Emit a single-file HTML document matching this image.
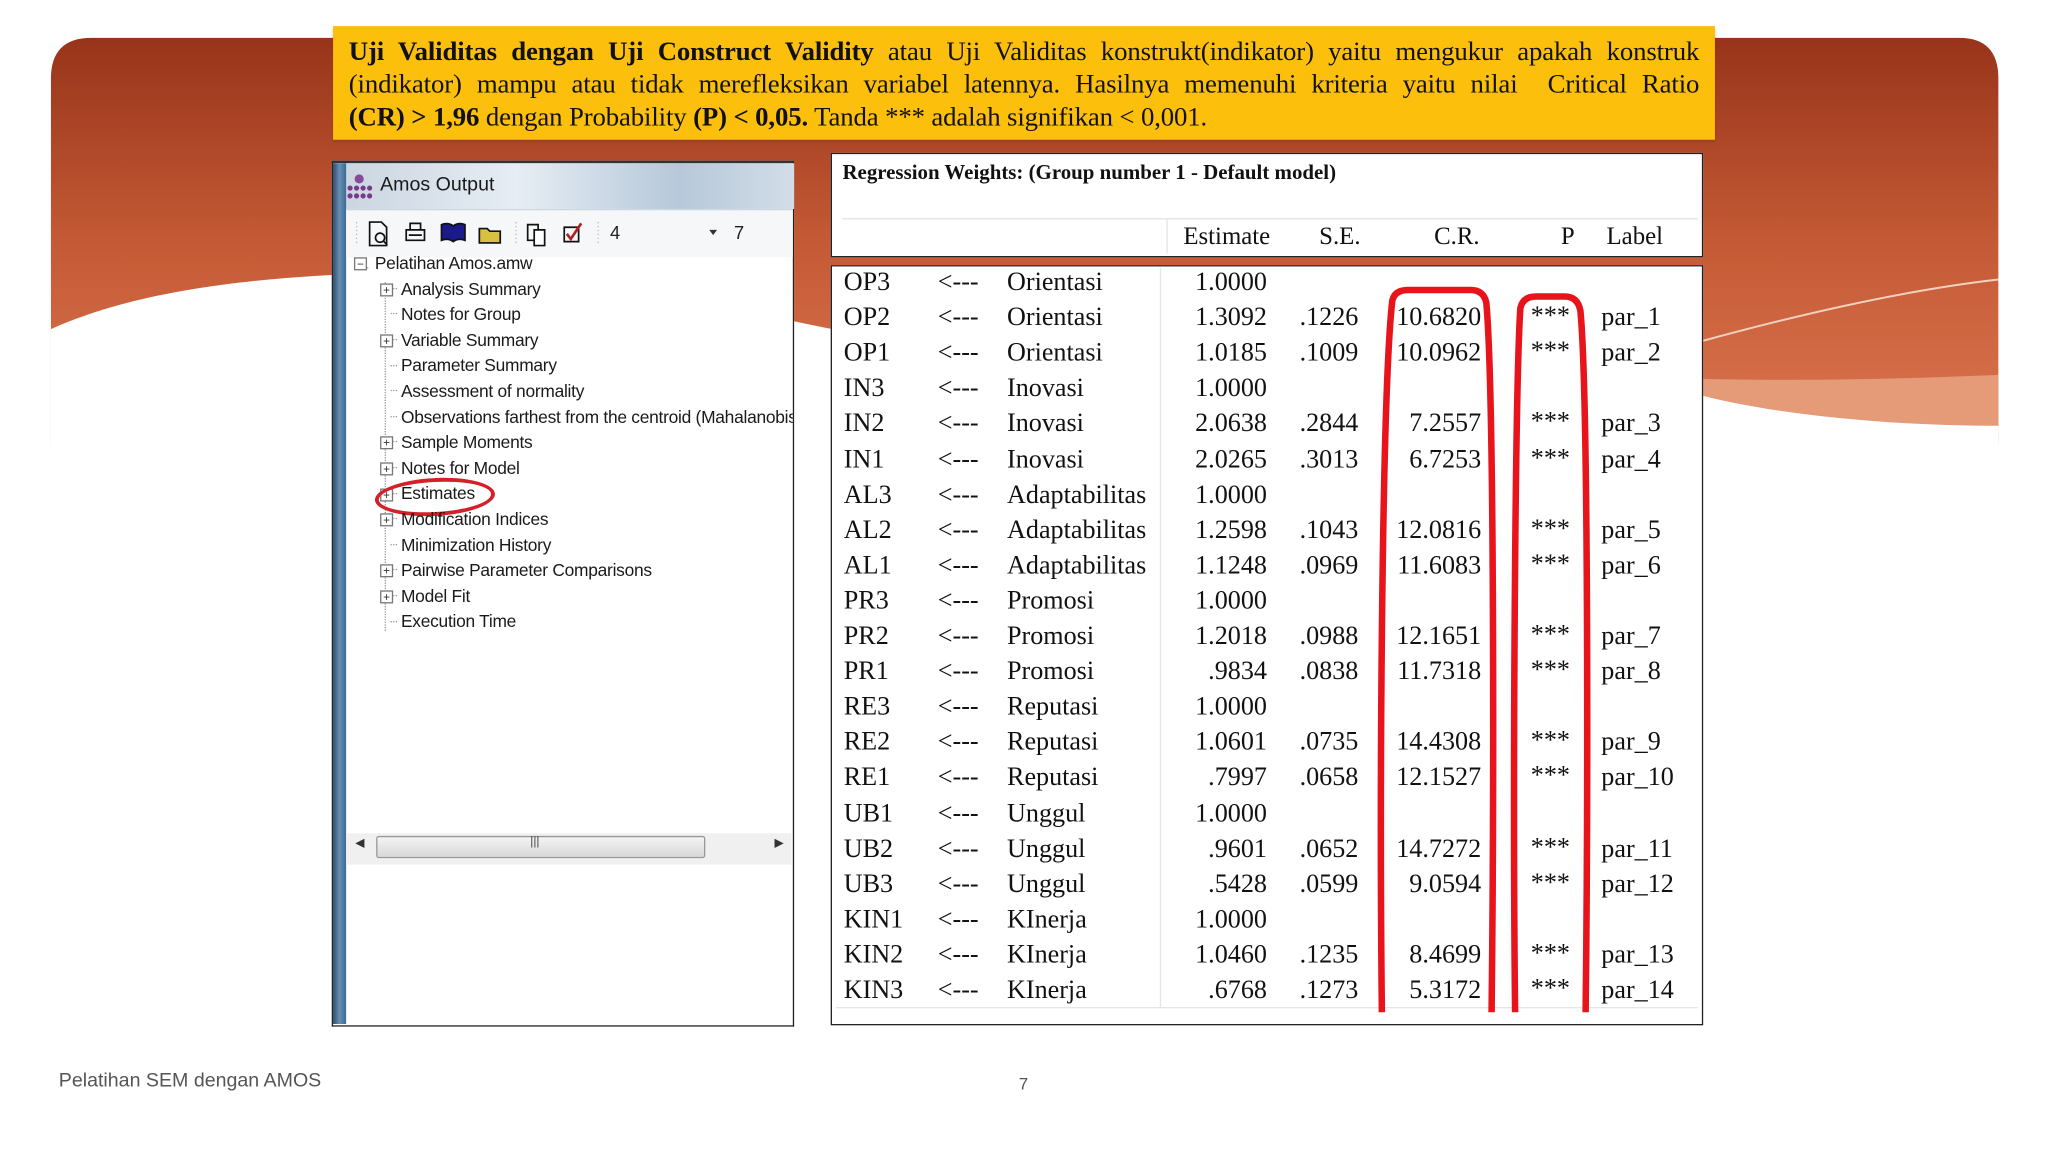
<!DOCTYPE html>
<html><head><meta charset="utf-8"><style>
html,body{margin:0;padding:0;background:#fff;overflow:hidden}
#w{width:2048px;height:1152px;position:relative;overflow:hidden}
#s{position:absolute;left:0;top:0;width:1568px;height:882px;transform:scale(1.30612);transform-origin:0 0}
.a{position:absolute;white-space:nowrap}
.ser{font-family:"Liberation Serif",serif}
.y{position:absolute;left:255px;top:20px;width:1058px;height:87px;background:#fcbf0c;box-shadow:0 2px 2px rgba(120,60,0,.35)}
.y div{position:absolute;left:12px;width:1034px;font-family:"Liberation Serif",serif;font-size:20.5px;color:#111;text-align:justify;text-align-last:justify;white-space:nowrap;letter-spacing:-.1px}
.t{font-family:"Liberation Sans",sans-serif;font-size:13.3px;color:#1a1a1a;letter-spacing:-.2px}
.pb{position:absolute;width:8px;height:8px;border:1px solid #777;background:#fff;font-size:9px;line-height:8px;text-align:center;color:#333;font-family:"Liberation Sans",sans-serif}
.r{font-family:"Liberation Serif",serif;font-size:20px;color:#111;line-height:24px}
.rt{text-align:right}
</style></head><body><div id="w"><div id="s">
<svg class="a" style="left:0;top:0" width="1568" height="882">
<defs><linearGradient id="g" x1="0" y1="0" x2="0" y2="1"><stop offset="0" stop-color="#98341a"/><stop offset=".5" stop-color="#c45a35"/><stop offset="1" stop-color="#db7650"/></linearGradient></defs>
<path d="M39,60 Q39,29 70,29 L1500,29 Q1530,29 1530,60 L1530,340 L39,340 Z" fill="url(#g)"/>
<path d="M1300,290 C1380,292 1460,290 1530,287 L1530,340 L1300,340Z" fill="#e59a78"/>
<path d="M39,252 C120,215 250,205 400,210 C500,215 600,250 700,262 L1300,302 C1360,318 1450,326 1530,326 L1530,400 L39,400Z" fill="#fff"/>
<path d="M1300,262 C1380,240 1460,222 1530,214" stroke="#f4d0c0" stroke-width="1.5" fill="none"/>
</svg>
<div class="y">
<div style="top:9px"><b>Uji Validitas dengan Uji Construct Validity</b> atau Uji Validitas konstrukt(indikator) yaitu mengukur apakah konstruk</div>
<div style="top:34px">(indikator) mampu atau tidak merefleksikan variabel latennya. Hasilnya memenuhi kriteria yaitu nilai&nbsp; Critical Ratio</div>
<div style="top:59px;text-align-last:left"><b>(CR) &gt; 1,96</b> dengan Probability <b>(P) &lt; 0,05.</b> Tanda *** adalah signifikan &lt; 0,001.</div>
</div>
<!-- Amos window -->
<div class="a" style="left:254px;top:123px;width:352px;height:660px;background:#fff;border:1px solid #222;border-top:2px solid #333"></div>
<div class="a" style="left:255px;top:125px;width:353px;height:35px;background:linear-gradient(90deg,#c9d4e0,#e6edf4 40%,#b6c8da 75%,#d2dde8)"></div>
<div class="a" style="left:255px;top:125px;width:10px;height:659px;background:linear-gradient(90deg,#2e4e6e,#6a90b4,#3a6a94)"></div>
<svg class="a" style="left:265px;top:133px" width="20" height="20"><circle cx="10" cy="4" r="3.5" fill="#8a4a9a"/><g fill="#7a3a8a"><circle cx="3" cy="11" r="2"/><circle cx="8" cy="11" r="2"/><circle cx="13" cy="11" r="2"/><circle cx="18" cy="11" r="2"/><circle cx="3" cy="17" r="2"/><circle cx="8" cy="17" r="2"/><circle cx="13" cy="17" r="2"/><circle cx="18" cy="17" r="2"/></g></svg>
<div class="a" style="left:291px;top:133px;font-family:'Liberation Sans',sans-serif;font-size:15px;color:#1a1a1a">Amos Output</div>
<div class="a" style="left:265px;top:160px;width:342px;height:36px;background:#f6f7f9;border-top:1px solid #cfd6de"></div>
<svg class="a" style="left:268px;top:164px" width="320" height="28">
<g stroke="#111" fill="none" stroke-width="1.3">
<path d="M15,6 h9 l4,4 v14 h-13z"/><circle cx="23" cy="18" r="3.5"/><path d="M25.5,20.5 l3,3"/>
<path d="M43,12 h14 v8 h-14z"/><path d="M46,12 v-5 h8 v5"/><path d="M45,16 h10"/>
<path d="M70,8 q5,-2 9,1 q4,-3 9,-1 v12 q-5,-2 -9,1 q-4,-3 -9,-1z" fill="#1a1a8a"/>
<path d="M99,22 v-11 h6 l2,2 h8 v9z" fill="#d8c040"/>
<path d="M136,8 h8 v12 h-8z"/><path d="M141,12 h8 v12 h-8z" fill="#fff"/>
<path d="M164,10 h11 v11 h-11z"/><path d="M166,15 l3,4 l8,-12" stroke="#b02020" stroke-width="2"/>
</g>
<path d="M5,6 v18 M127,6 v18 M190,6 v18" stroke="#bbb" stroke-dasharray="1 2"/>
<text x="199" y="19" font-family="Liberation Sans" font-size="14" fill="#222">4</text>
<path d="M275,12 h6 l-3,4z" fill="#333"/>
<text x="294" y="19" font-family="Liberation Sans" font-size="14" fill="#222">7</text>
</svg>
<svg class="a" style="left:265px;top:196px" width="40" height="290"><path d="M30,20 v268 M14,9 h4 M34,25 h6 M34,44 h6 M34,64 h6 M34,84 h6 M34,103 h6 M34,123 h6 M34,142 h6 M34,162 h6 M34,182 h6 M34,201 h6 M34,221 h6 M34,240 h6 M34,260 h6 M34,280 h6" stroke="#999" stroke-dasharray="1 1" stroke-width="1" fill="none"/></svg>
<div class="pb" style="left:271px;top:197px">−</div>
<div class="a t" style="left:287px;top:194px">Pelatihan Amos.amw</div>
<div class="pb" style="left:291px;top:217px">+</div><div class="a t" style="left:307px;top:214px">Analysis Summary</div>
<div class="a t" style="left:307px;top:233px">Notes for Group</div>
<div class="pb" style="left:291px;top:256px">+</div><div class="a t" style="left:307px;top:253px">Variable Summary</div>
<div class="a t" style="left:307px;top:272px">Parameter Summary</div>
<div class="a t" style="left:307px;top:292px">Assessment of normality</div>
<div class="a t" style="left:307px;top:312px;width:300px;overflow:hidden">Observations farthest from the centroid (Mahalanobis</div>
<div class="pb" style="left:291px;top:334px">+</div><div class="a t" style="left:307px;top:331px">Sample Moments</div>
<div class="pb" style="left:291px;top:354px">+</div><div class="a t" style="left:307px;top:351px">Notes for Model</div>
<div class="pb" style="left:291px;top:374px">+</div><div class="a t" style="left:307px;top:370px">Estimates</div>
<div class="a" style="left:287px;top:366px;width:86px;height:23px;border:3px solid #d42028;border-radius:50%;transform:rotate(-3deg)"></div>
<div class="pb" style="left:291px;top:393px">+</div><div class="a t" style="left:307px;top:390px">Modification Indices</div>
<div class="a t" style="left:307px;top:410px">Minimization History</div>
<div class="pb" style="left:291px;top:432px">+</div><div class="a t" style="left:307px;top:429px">Pairwise Parameter Comparisons</div>
<div class="pb" style="left:291px;top:452px">+</div><div class="a t" style="left:307px;top:449px">Model Fit</div>
<div class="a t" style="left:307px;top:468px">Execution Time</div>
<div class="a" style="left:265px;top:638px;width:341px;height:24px;background:#f0f0f0"></div>
<div class="a" style="left:288px;top:640px;width:250px;height:15px;border:1px solid #999;border-radius:2px;background:linear-gradient(#f4f4f4,#d8d8d8)"></div>
<div class="a" style="left:406px;top:639px;font-size:9px;font-family:'Liberation Sans';color:#444">|||</div>
<div class="a" style="left:272px;top:640px;font-size:9px;color:#333">◀</div>
<div class="a" style="left:593px;top:640px;font-size:9px;color:#333">▶</div>
<!-- right panel -->
<div class="a" style="left:636px;top:117px;width:666px;height:78px;background:#fff;border:1.5px solid #222"></div>
<div class="a ser" style="left:645px;top:124px;font-size:16px;font-weight:bold;color:#111">Regression Weights: (Group number 1 - Default model)</div>
<div class="a" style="left:645px;top:167px;width:655px;height:1px;background:#e3e3e3"></div>
<div class="a" style="left:893px;top:168px;width:1px;height:26px;background:#e3e3e3"></div>
<div class="a r" style="left:906px;top:170px;font-size:19px">Estimate</div>
<div class="a r" style="left:1010px;top:170px;font-size:19px">S.E.</div>
<div class="a r" style="left:1098px;top:170px;font-size:19px">C.R.</div>
<div class="a r" style="left:1195px;top:170px;font-size:19px">P</div>
<div class="a r" style="left:1230px;top:170px;font-size:19px">Label</div>
<div class="a" style="left:636px;top:203px;width:666px;height:580px;background:#fff;border:1.5px solid #222"></div>
<div class="a" style="left:888px;top:205px;width:1px;height:566px;background:#e6e6e6"></div>
<div class="a" style="left:640px;top:771px;width:660px;height:1px;background:#e6e6e6"></div>
<div id="rows"></div>
<svg class="a" style="left:0;top:0" width="1568" height="882">
<path d="M1058,775 C1056,600 1058,300 1066,230 Q1068,222 1078,222 L1126,222 Q1136,222 1138,232 C1144,300 1144,600 1142,775" stroke="#e8141c" stroke-width="5" fill="none"/>
<path d="M1160,775 C1158,600 1160,300 1164,236 Q1166,227 1176,227 L1198,227 Q1208,227 1210,238 C1216,300 1216,600 1214,775" stroke="#e8141c" stroke-width="5" fill="none"/>
</svg>
<div class="a" style="left:45px;top:819px;font-family:'Liberation Sans',sans-serif;font-size:15px;color:#555">Pelatihan SEM dengan AMOS</div>
<div class="a" style="left:780px;top:822px;font-family:'Liberation Sans',sans-serif;font-size:13px;color:#555">7</div>
<script>
var d=[["OP3","Orientasi","1.0000"],["OP2","Orientasi","1.3092",".1226","10.6820","***","par_1"],["OP1","Orientasi","1.0185",".1009","10.0962","***","par_2"],["IN3","Inovasi","1.0000"],["IN2","Inovasi","2.0638",".2844","7.2557","***","par_3"],["IN1","Inovasi","2.0265",".3013","6.7253","***","par_4"],["AL3","Adaptabilitas","1.0000"],["AL2","Adaptabilitas","1.2598",".1043","12.0816","***","par_5"],["AL1","Adaptabilitas","1.1248",".0969","11.6083","***","par_6"],["PR3","Promosi","1.0000"],["PR2","Promosi","1.2018",".0988","12.1651","***","par_7"],["PR1","Promosi",".9834",".0838","11.7318","***","par_8"],["RE3","Reputasi","1.0000"],["RE2","Reputasi","1.0601",".0735","14.4308","***","par_9"],["RE1","Reputasi",".7997",".0658","12.1527","***","par_10"],["UB1","Unggul","1.0000"],["UB2","Unggul",".9601",".0652","14.7272","***","par_11"],["UB3","Unggul",".5428",".0599","9.0594","***","par_12"],["KIN1","KInerja","1.0000"],["KIN2","KInerja","1.0460",".1235","8.4699","***","par_13"],["KIN3","KInerja",".6768",".1273","5.3172","***","par_14"]];
var h="";d.forEach(function(r,i){var t=204+27.1*i;
function c(x,w,s,al,dy){if(!s)return"";return'<div class="a r'+(al?' rt':'')+'" style="left:'+x+'px;top:'+(t+(dy||0))+'px;'+(w?'width:'+w+'px;':'')+'">'+s+'</div>';}
h+=c(646,0,r[0])+c(718,0,"&lt;---")+c(771,0,r[1])+c(860,110,r[2],1)+c(960,80,r[3],1)+c(1030,104,r[4],1)+c(1172,0,r[5],0,-1)+c(1226,0,r[6]);});
document.getElementById("rows").innerHTML=h;
</script>
</div></div></body></html>
